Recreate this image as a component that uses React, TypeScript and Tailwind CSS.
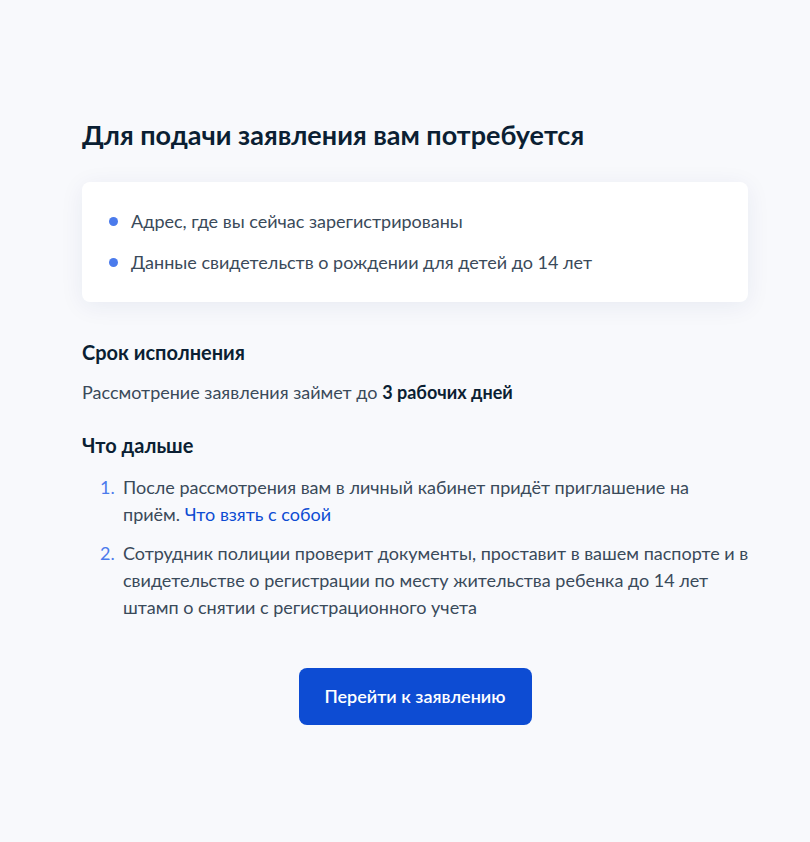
import React from "react";

export default function App() {
  return (
    <div className="min-h-[842px] w-full bg-[#f8f9fc] text-[#0b1f33]" style={{ fontFamily: "Lato, 'Noto Sans', sans-serif" }}>
      <div className="w-[666px] pt-[116px] ml-[82px]">
        <h1 className="text-[27px] leading-[38px] font-bold text-[#0b1f33]">Для подачи заявления вам потребуется</h1>
        <div className="mt-[28px] rounded-[8px] bg-white px-[24px] pt-[27px] pb-[28px] shadow-[0_4px_24px_rgba(0,40,110,0.07)]">
          <ul className="flex flex-col gap-[17px]">
            <li className="flex items-center text-[18px] leading-[24px] text-[#3a4a5a]">
              <span className="mr-[13px] ml-[3px] h-[9px] w-[9px] rounded-full bg-[#4b7bec]"></span>
              Адрес, где вы сейчас зарегистрированы
            </li>
            <li className="flex items-center text-[18px] leading-[24px] text-[#3a4a5a]">
              <span className="mr-[13px] ml-[3px] h-[9px] w-[9px] rounded-full bg-[#4b7bec]"></span>
              Данные свидетельств о рождении для детей до 14 лет
            </li>
          </ul>
        </div>
        <h2 className="mt-[37px] text-[20px] leading-[26px] font-bold">Срок исполнения</h2>
        <p className="mt-[14px] text-[18px] leading-[26px] text-[#3a4a5a]">
          Рассмотрение заявления займет до <span className="font-bold text-[#0b1f33]">3 рабочих дней</span>
        </p>
        <h2 className="mt-[27px] text-[20px] leading-[26px] font-bold">Что дальше</h2>
        <ol className="mt-[16px] mr-[-6px] flex flex-col gap-[12px] pl-[18px]">
          <li className="flex text-[18px] leading-[27px] text-[#3a4a5a]">
            <span className="w-[23px] shrink-0 text-[#4b7bec]">1.</span>
            <span className="max-w-[600px]">
              После рассмотрения вам в личный кабинет придёт приглашение на приём.{" "}
              <span className="text-[#0d4cd3]">Что взять с собой</span>
            </span>
          </li>
          <li className="flex text-[18px] leading-[27px] text-[#3a4a5a]">
            <span className="w-[23px] shrink-0 text-[#4b7bec]">2.</span>
            <span>
              Сотрудник полиции проверит документы, проставит в вашем паспорте и в свидетельстве о регистрации по месту жительства ребенка до 14 лет штамп о снятии с регистрационного учета
            </span>
          </li>
        </ol>
        <div className="mt-[47px] flex justify-center">
          <button className="h-[57px] w-[233px] rounded-[8px] bg-[#0d4cd3] text-[18px] font-semibold text-white">
            Перейти к заявлению
          </button>
        </div>
      </div>
    </div>
  );
}
